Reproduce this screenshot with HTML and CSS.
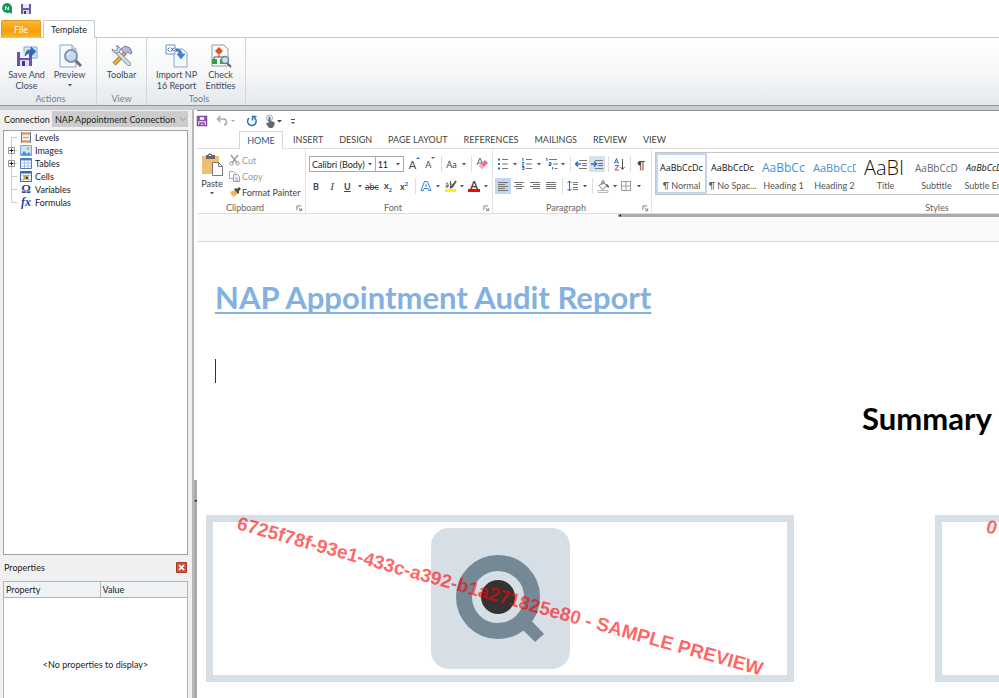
FILE: index.html
```
<!DOCTYPE html>
<html lang="en">
<head>
    <meta charset="UTF-8">
    <meta name="viewport" content="width=device-width, initial-scale=1.0">
    <title>Template Editor</title>
    <link rel="stylesheet" href="styles.css">
</head>
<body>
    <!-- shared icons -->
    <svg class="defs" width="0" height="0">
        <symbol id="caret" viewBox="0 0 8 16"><path d="M2 7h4l-2 2.5z" fill="#555"/></symbol>
        <symbol id="launcher" viewBox="0 0 8 8"><path d="M1 6V1h5M3 3l3 3M6.500 3.500v3h-3" fill="none" stroke="#777"/></symbol>
        <symbol id="floppy" viewBox="0 0 12 12"><path d="M1 1h10v10H1z" fill="#6a5aa8"/><path d="M3 1h6v4H3z" fill="#eceaf6"/><path d="M3 7h6v4H3z" fill="#d5d0ea"/><path d="M4 8h2v3H4z" fill="#42347f"/></symbol>
    </svg>

    <header class="titlebar">
        <svg width="11" height="11" viewBox="0 0 11 11"><path d="M5 0a5 5 0 1 0 2.500 9.400L10 11V5A5 5 0 0 0 5 0z" fill="#12995a"/><path d="M3.500 7V3.500L6.500 7V3.500" fill="none" stroke="#fff"/></svg>
        <svg width="12" height="12"><use href="#floppy"/></svg>
    </header>
    <nav class="app-tabs">
        <button class="file-tab">File</button>
        <button class="template-tab">Template</button>
    </nav>

    <section class="app-ribbon">
        <div class="app-group actions">
            <div class="app-buttons">
                <button class="big-btn">
                    <svg width="24" height="24" viewBox="0 0 24 24"><path d="M9 3h13v11H9z" fill="#dfeaf7" stroke="#8aa3c4"/><path d="M11 5h9v7h-9z" fill="#b8d0ec"/><path d="M2 8h15v14H2z" fill="#6a55a8"/><path d="M5 8h9v6H5z" fill="#f0eef8"/><path d="M5 16h9v6H5z" fill="#dedaf0"/><path d="M7 17h3v5H7z" fill="#45358a"/><path d="M10 12c0-4 2-6 6-6V3l5 4.500-5 4.500V9c-3 0-4 1-6 3z" fill="#2f6fca" stroke="#1c4c96" stroke-width=".5"/></svg>
                    Save And<br>Close
                </button>
                <button class="big-btn">
                    <svg width="24" height="24" viewBox="0 0 24 24"><path d="M2 1h12l4 4v18H2z" fill="#f5f9fd" stroke="#8ea6c2"/><path d="M14 1v4h4" fill="#dce8f4" stroke="#8ea6c2"/><path d="M17 16l6 6" stroke="#666e78" stroke-width="3"/><circle cx="13" cy="12" r="6" fill="#bddcf5" stroke="#8495a8" stroke-width="2"/><path d="M9.500 11a4 4 0 0 1 3-3" fill="none" stroke="#fff"/></svg>
                    Preview
                    <svg width="8" height="11" viewBox="0 3 8 11"><path d="M2 7h4l-2 2.500z" fill="#555"/></svg>
                </button>
            </div>
            <div class="app-label">Actions</div>
        </div>
        <div class="app-group view">
            <div class="app-buttons">
                <button class="big-btn">
                    <svg width="24" height="24" viewBox="0 0 24 24"><path d="M4 20L15 9" stroke="#98650f" stroke-width="4"/><path d="M4 20L15 9" stroke="#f0b43c" stroke-width="2.500"/><path d="M11 5l4-3 5 2 2 5-2 1-2-2-3 2z" fill="#b9b6dc" stroke="#7772a4"/><path d="M7 8l12 12" stroke="#72859c" stroke-width="4" stroke-linecap="round"/><path d="M7 8l12 12" stroke="#d6e0eb" stroke-width="2.500" stroke-linecap="round"/><path d="M2 5l3 2 2-1 1-3-2-1c4 0 5 3 4 5-2 3-7 3-8-2z" fill="#d6e0eb" stroke="#72859c"/></svg>
                    Toolbar
                </button>
            </div>
            <div class="app-label">View</div>
        </div>
        <div class="app-group tools">
            <div class="app-buttons">
                <button class="big-btn">
                    <svg width="24" height="24" viewBox="0 0 24 24"><path d="M9 5h9l4 4v14H9z" fill="#f2f7fd" stroke="#8ea6c8"/><path d="M1 1h9v9H1z" fill="#fff" stroke="#6e91c4"/><path d="M4.500 3.500L2.500 5.500l2 2M6 3.500l3 4M9 3.500l-3 4" fill="none" stroke="#3268b4"/><path d="M11 5c4 0 6 2 6 5h3l-4 5-4-5h2c0-2-1-3-3-3z" fill="#3d86dc" stroke="#235da8" stroke-width=".5"/></svg>
                    Import NP<br>16 Report
                </button>
                <button class="big-btn check">
                    <svg width="24" height="24" viewBox="0 0 24 24"><path d="M3 1h12l4 4v17H3z" fill="#f8fafc" stroke="#8d9cb0"/><path d="M10 3l4 4-4 4-4-4z" fill="#e84b26"/><path d="M10 11v2M5 15v-2h10v2" fill="none" stroke="#555"/><path d="M3 15h5v5H3zM11 15h5v5h-5z" fill="#2ba33a"/><path d="M18 19l4 4" stroke="#745f51" stroke-width="2"/><circle cx="16" cy="16" r="3.500" fill="#c7e3ee" stroke="#748697" stroke-width="1.500"/></svg>
                    Check<br>Entities
                </button>
            </div>
            <div class="app-label">Tools</div>
        </div>
    </section>

    <main class="workspace">
        <aside class="sidebar">
            <div class="connection">
                <label for="connection">Connection</label>
                <span class="select-box">
                    <select id="connection"><option>NAP Appointment Connection</option></select>
                    <svg width="8" height="8" viewBox="0 0 8 8"><path d="M1 2.500l3 3 3-3" fill="none" stroke="#999"/></svg>
                </span>
            </div>
            <ul class="tree">
                <li><svg width="9" height="13" viewBox="0 0 9 13"><path d="M3.500 13V6.500H9" fill="none" stroke="#ccc"/></svg><svg width="12" height="11" viewBox="0 0 12 11"><path d="M1 0h10v11H1z" fill="#e9edf2"/><path d="M2 .5h8v2H2zM2 8.500h8v2H2z" fill="#e98e31"/><path d="M1.500 0v11M10.500 0v11" stroke="#6d7890"/><path d="M3 5.500h6" stroke="#9faebf"/></svg>Levels</li>
                <li><svg width="9" height="13" viewBox="0 0 9 13"><path d="M3.500 0v13M7 6.500h2" stroke="#ccc"/><path d="M.5 3.500h6v6h-6z" fill="#fff" stroke="#999"/><path d="M1.500 6.500h4M3.500 4.500v4" stroke="#222"/></svg><svg width="12" height="11" viewBox="0 0 12 11"><path d="M.5.5h11v10H.5z" fill="#c9e3fa" stroke="#7ba7d4"/><path d="M1 10l3-4 3 3 2-2 2 3z" fill="#4790d5"/><circle cx="8" cy="3.500" r="1.500" fill="#f3b05a"/></svg>Images</li>
                <li><svg width="9" height="13" viewBox="0 0 9 13"><path d="M3.500 0v13M7 6.500h2" stroke="#ccc"/><path d="M.5 3.500h6v6h-6z" fill="#fff" stroke="#999"/><path d="M1.500 6.500h4M3.500 4.500v4" stroke="#222"/></svg><svg width="12" height="11" viewBox="0 0 12 11"><path d="M.5.5h11v10H.5z" fill="#fff" stroke="#4d7cc0"/><path d="M1 1.500h10" stroke="#4d7cc0" stroke-width="2"/><path d="M1 5h10M1 8h10M4.500 2v8M8 2v8" stroke="#a9c2e2"/></svg>Tables</li>
                <li><svg width="9" height="13" viewBox="0 0 9 13"><path d="M3.500 0v13M3.500 6.500H9" stroke="#ccc"/></svg><svg width="12" height="11" viewBox="0 0 12 11"><path d="M.5.5h11v10H.5z" fill="#fff" stroke="#3f64a8"/><path d="M1 1.500h10" stroke="#3f64a8" stroke-width="2"/><path d="M1 4.500h10M1 8.500h10M3.500 3v7M8.500 3v7" stroke="#b5c8e2"/><path d="M4 4h4v4H4z" fill="#d99b2b"/><path d="M6 6h2v2H6z" fill="#493b2c"/></svg>Cells</li>
                <li><svg width="9" height="13" viewBox="0 0 9 13"><path d="M3.500 0v13M3.500 6.500H9" stroke="#ccc"/></svg><i class="omega">Ω</i>Variables</li>
                <li><svg width="9" height="13" viewBox="0 0 9 13"><path d="M3.500 0v6.500H9" fill="none" stroke="#ccc"/></svg><i class="fx">fx</i>Formulas</li>
            </ul>
            <div class="prop-head">
                <h2>Properties</h2>
                <button class="close" aria-label="Close properties"><svg width="11" height="11" viewBox="0 0 11 11"><path d="M.5.5h10v10H.5z" fill="#d0573f" stroke="#a23c2c"/><path d="M3 3l5 5M8 3L3 8" stroke="#fff" stroke-width="1.500"/></svg></button>
            </div>
            <div class="prop-box">
                <table class="props">
                    <thead><tr><th>Property</th><th>Value</th></tr></thead>
                    <tbody><tr><td colspan="2">&lt;No properties to display&gt;</td></tr></tbody>
                </table>
            </div>
        </aside>
        <div class="splitter"><div class="handle"><svg width="4" height="5" viewBox="0 0 4 5"><path d="M0 3.500l2-2 2 2z" fill="#222"/></svg></div></div>

        <section class="editor">
            <div class="quickbar">
                <svg width="12" height="12" viewBox="0 0 12 12"><path d="M1.500 1.500h9v9h-9zM3 1.500v4h6v-4M4 10.500V8h4v2.500" fill="#fff" stroke="#8548a8" stroke-width="1.500"/></svg>
                <svg width="22" height="12" viewBox="0 0 22 12"><path d="M4.500 1L1.500 4l3 3M2 4h5a3 3 0 0 1 1 6" fill="none" stroke="#aaa" stroke-width="1.500"/><path d="M15 5h4l-2 2z" fill="#aaa"/></svg>
                <svg width="12" height="12" viewBox="0 0 12 12"><path d="M3 3A4.300 4.300 0 1 0 8 2.500M6.500 5.500V1.500h4" fill="none" stroke="#2b6fbf" stroke-width="1.500"/></svg>
                <svg width="16" height="14" viewBox="2 0 16 14"><circle cx="5.500" cy="4" r="3" fill="none" stroke="#7eaede"/><path d="M4.500 3.500c0-1 2-1 2 0V7l4 1v3l-2 3H5L2 9.500 3 8.500l1.500 1z" fill="#666"/><path d="M13 6h5l-2.500 2.500z" fill="#444"/></svg>
                <svg width="6" height="8" viewBox="0 0 6 8"><path d="M1 2.500h4" stroke="#555"/><path d="M1 5h4L3 7z" fill="#555"/></svg>
            </div>
            <nav class="tabs">
                <button class="home">HOME</button>
                <button>INSERT</button>
                <button>DESIGN</button>
                <button>PAGE LAYOUT</button>
                <button>REFERENCES</button>
                <button>MAILINGS</button>
                <button>REVIEW</button>
                <button>VIEW</button>
            </nav>

            <div class="ribbon">
                <div class="group clipboard">
                    <div class="group-body">
                        <button class="paste">
                            <svg width="22" height="23" viewBox="0 0 22 23"><path d="M1 3h17v18H1z" fill="#edbf70"/><path d="M5 2h2c0-2 4-2 4 0h3v4H5z" fill="#666"/><path d="M8 2.500h2" stroke="#fff"/><path d="M11.500 9.500h6l4 4v9h-10z" fill="#fff" stroke="#777"/><path d="M17.500 9.500v4h4" fill="none" stroke="#777"/></svg>
                            Paste
                            <svg width="8" height="10" viewBox="0 4 8 10"><path d="M2 7h4l-2 2.500z" fill="#555"/></svg>
                        </button>
                        <div class="clip-list">
                            <button class="off"><svg width="12" height="12" viewBox="0 0 12 12"><path d="M2 1l6 8M9 1L3 9" stroke="#999" stroke-width="1.300"/><circle cx="2.500" cy="9.500" r="1.700" fill="none" stroke="#999"/><circle cx="8.500" cy="9.500" r="1.700" fill="none" stroke="#999"/></svg>Cut</button>
                            <button class="off"><svg width="12" height="12" viewBox="0 0 12 12"><path d="M.5 1.500h4l2 2v5h-6z" fill="#fff" stroke="#aaa"/><path d="M4.500 4.500h4l2 2v5h-6z" fill="#f4f0f6" stroke="#a69bad"/><path d="M6 8h3M6 10h3" stroke="#aaa"/></svg>Copy</button>
                            <button><svg width="12" height="12" viewBox="0 0 12 12"><path d="M1 6l5-2 3 3-4 4c-1-1-3-2-4-5z" fill="#ebb761"/><path d="M5 3l2-1 1 1 2-2 2 2-2 2v2L9 8z" fill="#554b44"/></svg>Format Painter</button>
                        </div>
                    </div>
                    <div class="group-label">Clipboard<svg width="7" height="7"><use href="#launcher"/></svg></div>
                </div>

                <div class="group font">
                    <div class="group-body rows">
                        <div class="row">
                            <span class="select-box name"><select aria-label="Font"><option>Calibri (Body)</option></select><svg width="8" height="16"><use href="#caret"/></svg></span>
                            <span class="select-box size"><select aria-label="Font size"><option>11</option></select><svg width="8" height="16"><use href="#caret"/></svg></span>
                            <button class="tool grow">A<svg width="4" height="8" viewBox="0 0 4 8"><path d="M0 3l2-2 2 2z" fill="#2b6fbf"/></svg></button>
                            <button class="tool shrink">A<svg width="4" height="8" viewBox="0 0 4 8"><path d="M0 1h4L2 3z" fill="#2b6fbf"/></svg></button>
                            <span class="sep"></span>
                            <button class="tool drop">Aa<svg width="8" height="16"><use href="#caret"/></svg></button>
                            <span class="sep"></span>
                            <button class="tool" aria-label="Clear formatting"><svg width="14" height="14" viewBox="0 0 14 14"><path d="M2 8l3-7 3 7M3 6h4" fill="none" stroke="#666"/><path d="M4 9l6-6 3 3-6 6z" fill="#e5738a"/><path d="M4 9l2-2 3 3-2 2z" fill="#f4b8c2"/></svg></button>
                        </div>
                        <div class="row">
                            <button class="tool"><b>B</b></button>
                            <button class="tool serif"><i>I</i></button>
                            <button class="tool drop under"><u><b>U</b></u><svg width="8" height="16"><use href="#caret"/></svg></button>
                            <button class="tool"><s>abc</s></button>
                            <button class="tool"><b>x<sub>2</sub></b></button>
                            <button class="tool"><b>x<sup>2</sup></b></button>
                            <span class="sep"></span>
                            <button class="tool drop" aria-label="Text effects"><svg width="12" height="12" viewBox="0 0 12 12"><path d="M1 10.500L4.500 1.500h3L11 10.500H8.500L8 8.500H4l-.6 2z" fill="#fff" stroke="#3b83cf"/><path d="M5 6.500h2L6 3.500z" fill="#3b83cf"/></svg><svg width="8" height="16"><use href="#caret"/></svg></button>
                            <button class="tool drop" aria-label="Highlight"><svg width="14" height="13" viewBox="0 0 14 13"><path d="M2 4.500c0-2 2-2 2 0v2.500c-3 1-3-1.500 0-1.500M6.500 1v6c2 1 3-4 0-3" fill="none" stroke="#555"/><path d="M12 1L8 7 6 8" stroke="#555" stroke-width="1.800"/><path d="M1 9h11v3H1z" fill="#fff200"/></svg><svg width="8" height="16"><use href="#caret"/></svg></button>
                            <button class="tool drop"><span class="color-a">A</span><svg width="8" height="16"><use href="#caret"/></svg></button>
                        </div>
                    </div>
                    <div class="group-label">Font<svg width="7" height="7"><use href="#launcher"/></svg></div>
                </div>

                <div class="group paragraph">
                    <div class="group-body rows">
                        <div class="row">
                            <button class="tool drop" aria-label="Bullets"><svg width="12" height="12" viewBox="0 0 12 12"><path d="M1 1.500h2M1 6h2M1 10.500h2" stroke="#2b6fbf" stroke-width="2"/><path d="M5 1.500h6M5 6h6M5 10.500h6" stroke="#777"/></svg><svg width="8" height="16"><use href="#caret"/></svg></button>
                            <button class="tool drop" aria-label="Numbering"><svg width="12" height="12" viewBox="0 0 12 12"><path d="M1 .5h1V3M1 4.500h2L1 7h2M1 8.500h2v1H1.500 3v2H1" fill="none" stroke="#2b6fbf"/><path d="M5 1.500h6M5 6h6M5 10.500h6" stroke="#777"/></svg><svg width="8" height="16"><use href="#caret"/></svg></button>
                            <button class="tool drop" aria-label="Multilevel list"><svg width="14" height="12" viewBox="0 0 14 12"><path d="M1 .5h1V3M4 4.500h2v3H4V6h2M7.500 9v2.500" fill="none" stroke="#2b6fbf"/><path d="M4 1.500h8M8 6h5M9.500 10.500h3" stroke="#777"/></svg><svg width="8" height="16"><use href="#caret"/></svg></button>
                            <span class="sep"></span>
                            <button class="tool" aria-label="Decrease indent"><svg width="12" height="10" viewBox="0 0 12 10"><path d="M4 1.500h8M7 4.500h5M7 6.500h5M4 9.500h8" stroke="#777"/><path d="M0 5h6M3 2.500L.5 5 3 7.500" fill="none" stroke="#2b6fbf" stroke-width="1.500"/></svg></button>
                            <button class="tool lit" aria-label="Increase indent"><svg width="12" height="10" viewBox="0 0 12 10"><path d="M4 1.500h8M7 4.500h5M7 6.500h5M4 9.500h8" stroke="#777"/><path d="M0 5h5M3 2.500L5.500 5 3 7.500" fill="none" stroke="#2b6fbf" stroke-width="1.500"/></svg></button>
                            <span class="sep"></span>
                            <button class="tool" aria-label="Sort"><svg width="11" height="13" viewBox="0 0 11 13"><path d="M.5 5.500l2-5 2 5M1 4h3" fill="none" stroke="#2b6fbf"/><path d="M1 7.500h3.500L1 12h4" fill="none" stroke="#8548a8"/><path d="M8.500 1v10M6.500 9l2 2.500 2-2.500" fill="none" stroke="#555"/></svg></button>
                            <span class="sep"></span>
                            <button class="tool pilcrow">¶</button>
                        </div>
                        <div class="row">
                            <button class="tool active" aria-label="Align left"><svg width="10" height="10" viewBox="0 0 10 10"><path d="M0 1.500h10M0 3.500h7M0 5.500h10M0 7.500h7M0 9.500h10" stroke="#777"/></svg></button>
                            <button class="tool" aria-label="Center"><svg width="10" height="10" viewBox="0 0 10 10"><path d="M0 1.500h10M2 3.500h6M0 5.500h10M2 7.500h6" stroke="#777"/></svg></button>
                            <button class="tool" aria-label="Align right"><svg width="10" height="10" viewBox="0 0 10 10"><path d="M0 1.500h10M3 3.500h7M0 5.500h10M3 7.500h7" stroke="#777"/></svg></button>
                            <button class="tool" aria-label="Justify"><svg width="10" height="10" viewBox="0 0 10 10"><path d="M0 1.500h10M0 3.500h10M0 5.500h10M0 7.500h10" stroke="#777"/></svg></button>
                            <span class="sep"></span>
                            <button class="tool drop" aria-label="Line spacing"><svg width="12" height="12" viewBox="0 0 12 12"><path d="M2.500 1v10M.5 3l2-2 2 2M.5 9l2 2 2-2" fill="none" stroke="#2b6fbf"/><path d="M6 2.500h5M6 4.500h5M6 7.500h5M6 9.500h5" stroke="#777"/></svg><svg width="8" height="16"><use href="#caret"/></svg></button>
                            <span class="sep"></span>
                            <button class="tool drop" aria-label="Shading"><svg width="13" height="13" viewBox="0 0 13 13"><path d="M2 5.500l4-3 4 3-4 4z" fill="#fff" stroke="#777"/><path d="M5 5V1.500a1 1 0 0 1 2 0V4" fill="none" stroke="#777"/><path d="M9 4c2 0 3 1 3 4l-2-1z" fill="#2b6fbf"/><path d="M1 10.500h10v2H1z" fill="#fff" stroke="#bbb"/></svg><svg width="8" height="16"><use href="#caret"/></svg></button>
                            <button class="tool drop" aria-label="Borders"><svg width="10" height="10" viewBox="0 0 10 10"><path d="M.5.5h9v9h-9zM5 .5v9M.5 5h9" fill="none" stroke="#999"/></svg><svg width="8" height="16"><use href="#caret"/></svg></button>
                        </div>
                    </div>
                    <div class="group-label">Paragraph<svg width="7" height="7"><use href="#launcher"/></svg></div>
                </div>

                <div class="group styles">
                    <div class="group-body gallery">
                        <button class="style selected"><span class="sample">AaBbCcDc</span>¶ Normal</button>
                        <button class="style"><span class="sample">AaBbCcDc</span>¶ No Spac...</button>
                        <button class="style"><span class="sample h1">AaBbCc</span>Heading 1</button>
                        <button class="style"><span class="sample h2">AaBbCcD</span>Heading 2</button>
                        <button class="style"><span class="sample title">AaBl</span>Title</button>
                        <button class="style"><span class="sample sub">AaBbCcD</span>Subtitle</button>
                        <button class="style"><span class="sample em">AaBbCcDc</span>Subtle Em...</button>
                    </div>
                    <div class="group-label">Styles</div>
                </div>
            </div>
            <div class="ruler"><div class="scrollbar"><svg width="4" height="3" viewBox="0 0 4 3"><path d="M3 0v3L1 1.500z" fill="#222"/></svg></div></div>

            <article class="document">
                <div class="page">
                    <h1>NAP Appointment Audit Report</h1>
                    <div class="cursor"></div>
                    <h2>Summary</h2>
                    <div class="charts">
                        <svg class="chart" viewBox="0 0 588 167">
                            <rect x="3.500" y="3.500" width="581" height="160" fill="#fff" stroke="#d7dfe6" stroke-width="7"/>
                            <rect x="225" y="13" width="139" height="141" rx="18" fill="#d7dfe6"/>
                            <path d="M320 100l18 19-9 8-18-18z" fill="#748895"/>
                            <circle cx="292" cy="82" r="34" fill="none" stroke="#748895" stroke-width="16"/>
                            <circle cx="292" cy="82" r="17" fill="#333"/>
                            <text class="watermark" transform="translate(30 14) rotate(15.6)">6725f78f-93e1-433c-a392-b1a271825e80 - SAMPLE PREVIEW</text>
                        </svg>
                        <svg class="chart" viewBox="0 0 588 167">
                            <rect x="3.500" y="3.500" width="581" height="160" fill="#fff" stroke="#d7dfe6" stroke-width="7"/>
                            <text class="watermark" transform="translate(50 17) rotate(15.6)">0</text>
                        </svg>
                    </div>
                </div>
            </article>
        </section>
    </main>
</body>
</html>
```
FILE: styles.css
```
* {
    box-sizing: border-box;
}
body {
    margin: 0;
    height: 100vh;
    display: flex;
    flex-direction: column;
    overflow: hidden;
    background-color: #fff;
    color: #222;
    font-family: Lato, "Open Sans", sans-serif;
    font-size: 9px;
    line-height: 11px;
}
button, select {
    font: inherit;
    color: inherit;
    border: 0;
    margin: 0;
    padding: 0;
    background: none;
    white-space: nowrap;
}
svg {
    flex: none;
    display: block;
}
.defs {
    position: absolute;
}
h1, h2, ul {
    margin: 0;
    padding: 0;
}

/* Window header */
.titlebar {
    display: flex;
    align-items: center;
    gap: 7px;
    height: 20px;
    padding: 0 0 3px 2px;
}
.app-tabs {
    display: flex;
    height: 18px;
    padding-left: 1px;
    border-bottom: 1px solid #c3c8ce;
}
.file-tab {
    width: 40px;
    background: linear-gradient(#fbb63c, #f59e06 60%, #fbb62d);
    border: 1px solid #e39a1c;
    border-bottom: 0;
    border-radius: 2px 2px 0 0;
    color: #fff;
}
.template-tab {
    width: 52px;
    height: 18px;
    margin-left: 2px;
    border: 1px solid #c3c8ce;
    border-bottom: 0;
    border-radius: 2px 2px 0 0;
    background-color: #fff;
}
.app-ribbon {
    display: flex;
    height: 68px;
    background: linear-gradient(#fff, #f4f6f8 55%, #e4e8ec);
    border-bottom: 1px solid #92979d;
    color: #3d4a5c;
}
.app-group {
    display: flex;
    flex-direction: column;
    justify-content: space-between;
    padding: 6px 0 1px;
    border-right: 1px solid #d3d7dc;
}
.actions {
    width: 97px;
    padding-left: 5px;
}
.view {
    width: 50px;
}
.tools {
    width: 99px;
    padding-left: 6px;
}
.app-buttons {
    display: flex;
}
.big-btn {
    display: flex;
    flex-direction: column;
    align-items: center;
    flex: 1;
}
.big-btn > svg:first-child {
    margin-bottom: 1px;
}
.actions .big-btn {
    flex: none;
    width: 43px;
}
.tools .big-btn {
    flex: none;
    width: 47px;
}
.tools .check {
    width: 41px;
}
.app-label {
    text-align: center;
    color: #75808f;
}

/* Left panel */
.workspace {
    flex: 1;
    display: flex;
    min-height: 0;
    border-top: 4px solid #c9ced4;
    background-color: #f0f0f0;
}
.sidebar {
    width: 191px;
    flex: none;
    display: flex;
    flex-direction: column;
    padding: 1px 3px 0;
}
.connection {
    display: flex;
    align-items: center;
    justify-content: space-between;
    height: 16px;
    margin-bottom: 3px;
    padding-left: 1px;
}
.select-box {
    position: relative;
    display: flex;
}
.select-box select {
    appearance: none;
    width: 100%;
    height: 16px;
    padding: 0 3px;
}
.select-box svg {
    position: absolute;
    right: 1px;
    top: 0;
    pointer-events: none;
}
.connection .select-box {
    width: 136px;
    background-color: #ccc;
}
.connection .select-box svg {
    right: 1px;
    top: 4px;
}
.tree {
    flex: 1;
    border: 1px solid #9ba1a9;
    background-color: #fff;
    list-style: none;
}
.tree li {
    display: flex;
    align-items: center;
    gap: 3px;
    height: 13px;
    padding-left: 4px;
}
.tree i {
    width: 12px;
    text-align: center;
    color: #1f449c;
    font-family: "Liberation Serif", serif;
    font-size: 12px;
    font-weight: bold;
}
.tree .omega {
    font-style: normal;
}
.prop-head {
    display: flex;
    align-items: center;
    justify-content: space-between;
    height: 26px;
    padding: 0 1px 2px;
}
.prop-head h2 {
    font-size: 9px;
    font-weight: normal;
}
.prop-box {
    height: 117px;
    border: 1px solid #aeb5bd;
    border-bottom: 0;
    background-color: #fff;
}
.props {
    width: 100%;
    height: 100%;
    border-collapse: collapse;
}
.props th {
    height: 15px;
    padding: 0 2px;
    background-color: #eff3f6;
    border-bottom: 1px solid #aeb5bd;
    text-align: left;
    font-weight: normal;
}
.props th:first-child {
    width: 96px;
    border-right: 1px solid #aeb5bd;
}
.props td {
    height: 101px;
    padding: 61px 0 0;
    text-align: center;
    vertical-align: top;
}
.splitter {
    width: 6px;
    flex: none;
    display: flex;
    flex-direction: column;
    justify-content: flex-end;
    padding-left: 3px;
    background: linear-gradient(90deg, #f0f0f0 1px, #b8b8b8 1px 3px, #fff 3px);
}
.handle {
    height: 218px;
    padding-top: 18px;
    background-color: #aaa;
}

/* Editor */
.editor {
    flex: 1;
    min-width: 0;
    display: flex;
    flex-direction: column;
    background-color: #fff;
    border-top: 1px solid #8c8c8c;
    color: #444;
}
.quickbar {
    display: flex;
    align-items: center;
    gap: 8px;
    height: 20px;
    margin-left: -1px;
}
.tabs {
    display: flex;
    height: 18px;
    padding-left: 42px;
    border-bottom: 1px solid #ddd;
}
.tabs button {
    padding: 0 8px;
}
.tabs .home {
    width: 44px;
    height: 18px;
    margin-right: 2px;
    padding: 0;
    border: 1px solid #d5d5d5;
    border-bottom: 0;
    background-color: #fff;
    color: #2b579a;
}
.ribbon {
    display: flex;
    height: 65px;
    border-bottom: 1px solid #ddd;
}
.group {
    flex: none;
    display: flex;
    flex-direction: column;
    padding: 3px 2px 0;
    border-right: 1px solid #e3e3e3;
}
.group-body {
    flex: 1;
    display: flex;
}
.group-label {
    position: relative;
    height: 11px;
    padding-right: 12px;
    color: #666;
    text-align: center;
}
.group-label svg {
    position: absolute;
    right: 0;
    bottom: 1px;
}
.clipboard {
    width: 109px;
}
.font {
    width: 187px;
}
.paragraph {
    width: 159px;
}
.paste {
    display: flex;
    flex-direction: column;
    align-items: center;
    width: 26px;
    padding-top: 1px;
}
.paste > svg:first-child {
    margin-bottom: 2px;
}
.clip-list {
    display: flex;
    flex-direction: column;
}
.clip-list button {
    display: flex;
    align-items: center;
    gap: 1px;
    height: 16px;
    padding-left: 4px;
}
.clip-list .off {
    color: #999;
}
.rows {
    flex-direction: column;
    gap: 6px;
    padding-top: 4px;
}
.row {
    display: flex;
    height: 16px;
}
.name, .size {
    width: 67px;
    margin-left: 1px;
    border: 1px solid #ababab;
    color: #222;
}
.size {
    width: 30px;
    margin-left: -1px;
    margin-right: 2px;
}
.name select, .size select {
    height: 14px;
    padding: 0 2px;
}
.name svg, .size svg {
    top: -1px;
}
.tool {
    display: flex;
    align-items: center;
    justify-content: center;
    width: 16px;
    height: 16px;
}
.drop {
    width: 24px;
    justify-content: space-between;
    padding-left: 2px;
}
.under {
    padding-left: 4px;
}
.grow {
    font-size: 11px;
}
.grow svg, .shrink svg {
    align-self: flex-start;
}
.serif {
    font-family: "Liberation Serif", serif;
    font-size: 11px;
}
.tool sub, .tool sup {
    font-size: 6px;
    line-height: 6px;
    color: #2b6fbf;
}
.sep {
    width: 6px;
    height: 16px;
    background: linear-gradient(#ddd, #ddd) 3px 0 / 1px 16px no-repeat;
}
.color-a {
    width: 12px;
    border-bottom: 3px solid #f00;
    font-size: 11px;
    font-weight: bold;
    line-height: 9px;
    text-align: center;
}
.pilcrow {
    font-size: 11px;
}
.lit {
    background-color: #d5e1f2;
}
.active {
    background-color: #c2d5f2;
}
.styles {
    flex: 1;
    min-width: 0;
    border-right: 0;
    padding: 3px 0 0 3px;
}
.gallery {
    flex: none;
    height: 43px;
    margin-bottom: 7px;
    border: 1px solid #c6c6c6;
    border-right: 0;
    overflow: hidden;
}
.styles .group-label {
    width: 564px;
    padding: 0;
}
.style {
    display: flex;
    flex: none;
    flex-direction: column;
    align-items: center;
    width: 51px;
    height: 41px;
    padding: 3px 4px;
    overflow: hidden;
    color: #555;
}
.selected {
    outline: 2px solid #c2d5f2;
    outline-offset: -2px;
}
.sample {
    align-self: stretch;
    height: 24px;
    line-height: 24px;
    overflow: hidden;
    text-align: left;
    color: #111;
    font-family: "Open Sans", sans-serif;
    font-size: 9px;
}
.h1 {
    color: #4a8fd0;
    font-size: 12px;
}
.h2 {
    color: #4a8fd0;
    font-size: 11px;
}
.title {
    font-size: 20px;
    font-weight: 300;
}
.sub {
    font-size: 10px;
    color: #666;
}
.em {
    font-style: italic;
}
.ruler {
    height: 28px;
    flex: none;
    margin-left: 1px;
    padding-left: 420px;
    background-color: #fafafa;
    border-bottom: 1px solid #d5d5d5;
}
.scrollbar {
    height: 3px;
    background-color: #aaa;
}

/* Document */
.document {
    flex: 1;
    min-height: 0;
    overflow: hidden;
    color: #000;
}
.page {
    width: 1460px;
    padding: 35px 9px 0;
}
.page h1 {
    margin-left: 9px;
    color: #83b1e1;
    font-size: 31px;
    line-height: 40px;
    text-decoration: underline;
    text-decoration-thickness: 2px;
    text-underline-offset: 3px;
    text-decoration-skip-ink: none;
}
.cursor {
    width: 1px;
    height: 24px;
    margin: 42px 0 0 9px;
    background-color: #333;
}
.page h2 {
    margin-top: 15px;
    font-size: 31px;
    line-height: 40px;
    text-align: center;
}
.charts {
    display: flex;
    gap: 141px;
    margin-top: 77px;
}
.chart {
    width: 588px;
}
.watermark {
    fill: #f00;
    fill-opacity: .62;
    font-family: "Liberation Sans", Arial, sans-serif;
    font-size: 19px;
    font-weight: bold;
}
```
